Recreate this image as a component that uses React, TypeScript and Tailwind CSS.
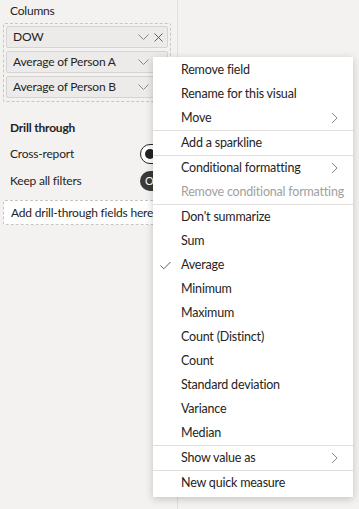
import React from 'react';

const font = { fontFamily: 'Lato, "Noto Sans", sans-serif' };

type Item = { label: string; sub?: boolean; disabled?: boolean; checked?: boolean } | 'sep';

const items: Item[] = [
  { label: 'Remove field' },
  { label: 'Rename for this visual' },
  { label: 'Move', sub: true },
  'sep',
  { label: 'Add a sparkline' },
  'sep',
  { label: 'Conditional formatting', sub: true },
  { label: 'Remove conditional formatting', disabled: true },
  'sep',
  { label: "Don't summarize" },
  { label: 'Sum' },
  { label: 'Average', checked: true },
  { label: 'Minimum' },
  { label: 'Maximum' },
  { label: 'Count (Distinct)' },
  { label: 'Count' },
  { label: 'Standard deviation' },
  { label: 'Variance' },
  { label: 'Median' },
  'sep',
  { label: 'Show value as', sub: true },
  'sep',
  { label: 'New quick measure' },
];

const Chevron = () => (
  <svg width="7" height="12" viewBox="0 0 7 12">
    <path d="M1 1 L6 6 L1 11" fill="none" stroke="#8a8886" strokeWidth="1" />
  </svg>
);

const Check = () => (
  <svg width="11" height="9" viewBox="0 0 11 9">
    <path d="M0.5 4.5 L3.8 7.8 L10.5 1" fill="none" stroke="#605e5c" strokeWidth="1" />
  </svg>
);

const Pill = ({ label, remove }: { label: string; remove?: boolean }) => (
  <div className="flex items-center justify-between h-[22px] bg-[#ecebea] border border-[#d6d4d2] rounded-[2px] pl-[6px] pr-[4px] text-[12px] tracking-[-0.2px] text-[#252423]">
    <span>{label}</span>
    <div className="flex items-center gap-[5px]">
      <svg width="11" height="7" viewBox="0 0 11 7">
        <path d="M0.5 0.5 L5.5 5.5 L10.5 0.5" fill="none" stroke="#8a8886" strokeWidth="1" />
      </svg>
      <svg width="9" height="9" viewBox="0 0 9 9" className={remove ? '' : 'invisible'}>
        <path d="M0.5 0.5 L8.5 8.5 M8.5 0.5 L0.5 8.5" fill="none" stroke="#605e5c" strokeWidth="1" />
      </svg>
    </div>
  </div>
);

export default function App() {
  return (
    <div className="relative w-[359px] h-[509px] bg-[#f3f2f1] overflow-hidden" style={font}>
      {/* field well panel */}
      <div className="w-[178px] h-full border-r border-[#e1dfdd] pt-[1px] flex flex-col text-[12px] tracking-[-0.2px] text-[#252423]">
        <div className="pl-[10px] h-[20px] flex items-center">Columns</div>
        <div className="mt-[2px] ml-[3px] w-[168px] border border-dashed border-[#c8c6c4] rounded-[2px] p-[2px] pb-[3px] flex flex-col gap-[3px]">
          <Pill label="DOW" remove />
          <Pill label="Average of Person A" />
          <Pill label="Average of Person B" />
        </div>

        <div className="mt-[16px] pl-[10px] h-[20px] flex items-center font-bold">Drill through</div>
        <div className="mt-[6px] pl-[10px] h-[20px] grid grid-cols-[130px_40px] items-center">
          <span>Cross-report</span>
          <div className="h-[20px] rounded-full border border-[#252423] bg-white flex items-center pl-[4px]">
            <div className="w-[10px] h-[10px] rounded-full bg-[#252423]" />
          </div>
        </div>
        <div className="mt-[7px] pl-[10px] h-[20px] grid grid-cols-[130px_40px] items-center">
          <span>Keep all filters</span>
          <div className="h-[20px] rounded-full bg-[#3b3a39] flex items-center pl-[5px] text-[11px] text-white">
            On
          </div>
        </div>
        <div className="mt-[9px] ml-[3px] w-[200px] h-[25px] border border-dashed border-[#c8c6c4] rounded-[2px] bg-white pl-[7px] flex items-center whitespace-nowrap">
          Add drill-through fields here
        </div>
      </div>

      {/* context menu */}
      <div className="absolute left-[153px] top-[57px] w-[200px] bg-white pt-px pb-[2px] shadow-[0_2px_8px_rgba(0,0,0,0.2)] text-[12.5px] tracking-[-0.2px] flex flex-col">
        {items.map((it, i) =>
          it === 'sep' ? (
            <div key={i} className="h-px bg-[#e1dfdd]" />
          ) : (
            <div
              key={i}
              className={`h-6 grid grid-cols-[28px_1fr_22px] items-center whitespace-nowrap ${
                it.disabled ? 'text-[#a19f9d]' : 'text-[#252423]'
              }`}
            >
              <div className="flex justify-center pr-[4px]">{it.checked && <Check />}</div>
              <span>{it.label}</span>
              <div className="flex">{it.sub && <Chevron />}</div>
            </div>
          )
        )}
      </div>
    </div>
  );
}
